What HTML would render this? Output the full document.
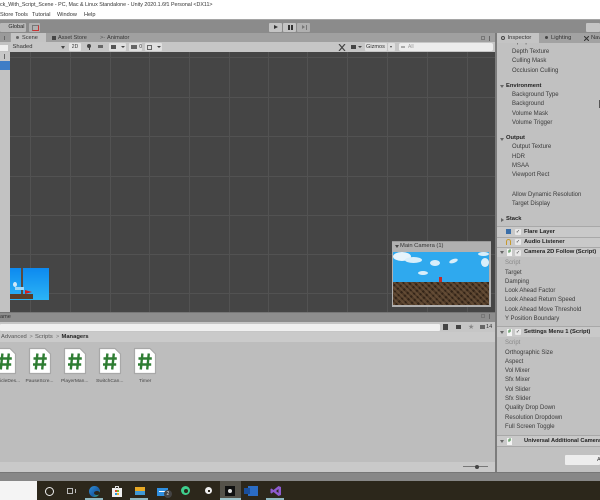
<!DOCTYPE html>
<html><head><meta charset="utf-8">
<style>
html,body{margin:0;padding:0;background:#fff}
#r{position:relative;width:600px;height:500px;overflow:hidden;font-family:"Liberation Sans",sans-serif;color:#222;background:#fff;filter:blur(.3px)}
#r div{position:absolute}
.t{white-space:nowrap;font-size:5.6px;line-height:9px;color:#333}
.ins{white-space:nowrap;font-size:6px;line-height:9px;color:#3a3a3a}
.b{font-weight:bold;color:#222;font-size:5.8px}
.v{background:#525252;width:1px;top:52px;height:260px;left:0}
.h{background:#525252;height:1px;left:10px;width:485px}
.btn{background:#d2d2d2;border-radius:1px}
.chk{width:6px;height:6px;background:#e8e8e8;border-radius:1px;font-size:5px;line-height:6px;text-align:center;color:#333}
.sep{background:#a8a8a8;height:1px;left:497px;width:103px}
.file{position:absolute;top:347px}
.fn{top:378px;font-size:4.9px;line-height:7px;color:#444;white-space:nowrap;text-align:center}
</style></head><body><div id="r">

<svg width="0" height="0" style="position:absolute"><defs><symbol id="f" viewBox="0 0 24 28"><path d="M1.5 1.5H17L22.5 7V26.5H1.5Z" fill="#fff" stroke="#a8a8a8" stroke-width="1.2" stroke-linejoin="round"/><path d="M9.4 6.5L7.8 22.5M15.8 6.5L14.2 22.5M5.5 11.5H18.8M5 17.5H18.2" stroke="#2e7d32" stroke-width="2.4" fill="none"/></symbol></defs></svg>

<div class="t" style="left:0;top:1px;font-size:5.32px;line-height:9px;color:#333">ck_With_Script_Scene - PC, Mac &amp; Linux Standalone - Unity 2020.1.6f1 Personal &lt;DX11&gt;</div>
<div class="t" style="left:0;top:10.5px">Store Tools</div>
<div class="t" style="left:32px;top:10.5px">Tutorial</div>
<div class="t" style="left:57px;top:10.5px">Window</div>
<div class="t" style="left:84px;top:10.5px">Help</div>

<div style="left:0;top:19px;width:600px;height:14px;background:#8b8b8b;border-top:1px solid #a5a5a5;box-sizing:border-box"></div>
<div class="btn t" style="left:0;top:23px;width:26px;height:9px;background:#b8b8b8;text-align:right;padding-right:1.5px;box-sizing:border-box;color:#222">Global</div>
<div class="btn" style="left:29px;top:23px;width:11px;height:9px;background:#b0b0b0"></div>
<div style="left:32px;top:25px;width:5px;height:4px;border:1px solid #777;border-bottom-color:#c33;border-right-color:#c33"></div>

<div class="btn" style="left:269px;top:23px;width:13px;height:9px;background:#c4c4c4"></div>
<div style="left:274px;top:25px;width:0;height:0;border-left:4px solid #333;border-top:2.5px solid transparent;border-bottom:2.5px solid transparent"></div>
<div class="btn" style="left:283px;top:23px;width:13px;height:9px;background:#c4c4c4"></div>
<div style="left:288px;top:25px;width:1.5px;height:5px;background:#333"></div>
<div style="left:291px;top:25px;width:1.5px;height:5px;background:#333"></div>
<div class="btn" style="left:297px;top:23px;width:13px;height:9px;background:#b0b0b0"></div>
<div style="left:302px;top:25px;width:0;height:0;border-left:3px solid #777;border-top:2.5px solid transparent;border-bottom:2.5px solid transparent"></div>
<div style="left:306px;top:25px;width:1px;height:5px;background:#777"></div>
<div class="btn" style="left:586px;top:23px;width:14px;height:9px;background:#c4c4c4"></div>

<!-- left panel -->
<div style="left:0;top:33px;width:10px;height:279px;background:#c2c2c2"></div>
<div style="left:0;top:33px;width:10px;height:9px;background:#9a9a9a"></div>
<div style="left:0;top:45px;width:8px;height:6px;background:#eee"></div>
<div style="left:0;top:52px;width:10px;height:9px;background:#c8c8c8"></div>
<div style="left:0;top:61px;width:10px;height:9px;background:#3e7dc6"></div>
<div style="left:3.5px;top:36px;width:1px;height:4px;background:#666"></div>
<div style="left:3.5px;top:54px;width:1px;height:5px;background:#666"></div>

<!-- tabs -->
<div style="left:10px;top:33px;width:486px;height:9px;background:#a0a0a0"></div>
<div style="left:11px;top:33px;width:35px;height:9px;background:#c4c4c4"></div>
<div class="t" style="left:22px;top:33.5px">Scene</div>
<div style="left:16px;top:36px;width:3px;height:3px;border-radius:50%;background:#666"></div>
<div class="t" style="left:58px;top:33.5px">Asset Store</div>
<div style="left:52px;top:36px;width:4px;height:4px;background:#444"></div>
<div class="t" style="left:107px;top:33.5px">Animator</div>
<div class="t" style="left:100px;top:33.5px;color:#555">&gt;-</div>
<div style="left:481px;top:36px;width:4px;height:4px;border:1px solid #777;box-sizing:border-box"></div>
<div style="left:489px;top:36px;width:1px;height:5px;background:#666"></div>

<!-- scene toolbar -->
<div style="left:10px;top:42px;width:486px;height:10px;background:#c6c6c6"></div>
<div class="t" style="left:12.5px;top:42.5px;font-size:5.8px">Shaded</div>
<div style="left:61px;top:46px;width:0;height:0;border-top:3px solid #444;border-left:2px solid transparent;border-right:2px solid transparent"></div>
<div class="btn t" style="left:69px;top:43px;width:12px;height:8px;background:#e4e4e4;font-size:5px;text-align:center;line-height:8px">2D</div>
<div style="left:87px;top:44px;width:4px;height:4px;background:#444;border-radius:50%"></div>
<div style="left:88.5px;top:47px;width:1px;height:3px;background:#444"></div>
<div style="left:98px;top:45px;width:5px;height:3px;background:#666"></div>
<div class="btn" style="left:109px;top:43px;width:17px;height:8px;background:#e0e0e0"></div>
<div style="left:111px;top:45px;width:5px;height:4px;background:#555"></div>
<div style="left:121px;top:46px;width:0;height:0;border-top:2.5px solid #444;border-left:2px solid transparent;border-right:2px solid transparent"></div>
<div class="btn t" style="left:129px;top:43px;width:13px;height:8px;background:#e0e0e0;font-size:5px;line-height:8px;text-align:right">0</div>
<div style="left:131px;top:45px;width:6px;height:4px;background:#666"></div>
<div class="btn" style="left:145px;top:43px;width:17px;height:8px;background:#e0e0e0"></div>
<div style="left:147px;top:45px;width:5px;height:5px;border:1px solid #666;box-sizing:border-box"></div>
<div style="left:157px;top:46px;width:0;height:0;border-top:2.5px solid #444;border-left:2px solid transparent;border-right:2px solid transparent"></div>

<svg style="position:absolute;left:338px;top:44px" width="8" height="7" viewBox="0 0 8 7"><path d="M1 0L7 7M7 0L1 7" stroke="#444" stroke-width="1.2"/></svg>
<div style="left:351px;top:45px;width:5px;height:4px;background:#444"></div>
<div style="left:358px;top:46px;width:0;height:0;border-top:2.5px solid #444;border-left:2px solid transparent;border-right:2px solid transparent"></div>
<div class="btn t" style="left:365px;top:43px;width:22px;height:8px;background:#e0e0e0;font-size:5.6px;line-height:8px;padding-left:1px;box-sizing:border-box">Gizmos</div>
<div class="btn" style="left:388px;top:43px;width:7px;height:8px;background:#e0e0e0"></div>
<div style="left:390px;top:46px;width:0;height:0;border-top:2.5px solid #444;border-left:1.5px solid transparent;border-right:1.5px solid transparent"></div>
<div style="left:399px;top:43px;width:94px;height:8px;background:#ececec;border-radius:2px"></div>
<div class="t" style="left:408px;top:43px;font-size:5px;line-height:8px;color:#999">All</div>
<div style="left:401px;top:46px;width:4px;height:2px;background:#aaa"></div>

<!-- scene -->
<div style="left:10px;top:52px;width:486px;height:260px;background:#454545"></div>
<div class="v" style="left:30px"></div><div class="v" style="left:70px"></div><div class="v" style="left:110px"></div><div class="v" style="left:149px"></div><div class="v" style="left:189px"></div><div class="v" style="left:229px"></div><div class="v" style="left:268px"></div><div class="v" style="left:307px"></div><div class="v" style="left:347px"></div><div class="v" style="left:387px"></div><div class="v" style="left:427px"></div><div class="v" style="left:467px"></div>
<div class="h" style="top:57px"></div><div class="h" style="top:97px"></div><div class="h" style="top:136px"></div><div class="h" style="top:176px"></div><div class="h" style="top:215px"></div><div class="h" style="top:254px"></div><div class="h" style="top:293px"></div>

<div style="left:10px;top:268px;width:39px;height:32px;background:linear-gradient(#0d8af0,#2cb4f5)"></div>
<div style="left:10px;top:294px;width:23px;height:5px;background:#5a3d28"></div>
<div style="left:21px;top:268px;width:1.5px;height:26px;background:#5a4a40"></div>
<div style="left:25px;top:290px;width:0;height:0;border-left:7px solid #d21c1c;border-top:2px solid transparent;border-bottom:2px solid transparent"></div>
<div style="left:13px;top:282px;width:4px;height:5px;background:#cfe8f8;border-radius:50%"></div>
<div style="left:15px;top:287px;width:9px;height:3px;background:#9fd8f8"></div>

<!-- camera preview -->
<div style="left:392px;top:241px;width:99px;height:66px;background:#b0b0b0;border-top:1px solid #999;box-sizing:border-box"></div>
<div class="t" style="left:400px;top:242px;font-size:5.8px;line-height:9px">Main Camera (1)</div>
<div style="left:395px;top:245px;width:0;height:0;border-top:3px solid #444;border-left:2px solid transparent;border-right:2px solid transparent"></div>
<div style="left:393px;top:252px;width:96px;height:30px;background:#2fa9ee"></div>
<div style="left:393px;top:282px;width:96px;height:23px;background-color:#4c3826;background-image:repeating-linear-gradient(45deg,rgba(110,85,60,.7) 0 2px,transparent 2px 4px),repeating-linear-gradient(-45deg,rgba(40,28,18,.7) 0 2px,transparent 2px 5px)"></div>
<div style="left:393px;top:252px;width:18px;height:9px;background:#e6f4fc;border-radius:50%"></div>
<div style="left:405px;top:257px;width:17px;height:6px;background:#d8eefa;border-radius:50%"></div>
<div style="left:430px;top:260px;width:10px;height:6px;background:#d8eefa;border-radius:50%"></div>
<div style="left:449px;top:259px;width:9px;height:4px;background:#d8eefa;border-radius:50%;transform:rotate(-20deg)"></div>
<div style="left:418px;top:271px;width:10px;height:4px;background:#d8eefa;border-radius:50%"></div>
<div style="left:478px;top:252px;width:11px;height:4px;background:#d8eefa;border-radius:50%"></div>
<div style="left:481px;top:258px;width:8px;height:9px;background:#d8eefa;border-radius:50%"></div>
<div style="left:439px;top:277px;width:3px;height:5px;background:#c22a2a"></div>

<!-- project panel -->
<div style="left:0;top:312px;width:496px;height:10px;background:#8d8d8d;border-top:1px solid #777;box-sizing:border-box"></div>
<div class="t" style="left:0;top:313px">ame</div>
<div style="left:0;top:322px;width:496px;height:10px;background:#c6c6c6"></div>
<div style="left:0;top:323.5px;width:440px;height:7px;background:#f0f0f0;border-radius:1px"></div>
<div style="left:481px;top:314px;width:4px;height:4px;border:1px solid #777;box-sizing:border-box"></div>
<div style="left:489px;top:314px;width:1px;height:5px;background:#666"></div>
<div style="left:443px;top:324px;width:5px;height:6px;background:#444"></div>
<div style="left:456px;top:325px;width:5px;height:4px;background:#444"></div>
<div class="t" style="left:468px;top:323px;font-size:7px;color:#888">★</div>
<div style="left:480px;top:325px;width:5px;height:4px;background:#666"></div>
<div class="t" style="left:486px;top:323px;font-size:5.6px;line-height:8px">14</div>
<div style="left:0;top:332px;width:496px;height:10px;background:#cacaca"></div>
<div style="left:0;top:342px;width:496px;height:120px;background:#bdbdbd"></div>
<div class="t" style="left:1px;top:332.5px;font-size:5.8px;color:#555">Advanced</div>
<div class="t" style="left:29.5px;top:332.5px;color:#777">&gt;</div>
<div class="t" style="left:35px;top:332.5px;font-size:5.8px;color:#555">Scripts</div>
<div class="t" style="left:56px;top:332.5px;color:#777">&gt;</div>
<div class="t b" style="left:61.5px;top:332.5px;font-size:5.8px">Managers</div>

<svg class="file" style="left:-7px" width="24" height="28"><use href="#f"/></svg>
<svg class="file" style="left:27.5px" width="24" height="28"><use href="#f"/></svg>
<svg class="file" style="left:62.5px" width="24" height="28"><use href="#f"/></svg>
<svg class="file" style="left:98px" width="24" height="28"><use href="#f"/></svg>
<svg class="file" style="left:133px" width="24" height="28"><use href="#f"/></svg>
<div class="fn" style="left:0">icleDes...</div>
<div class="fn" style="left:25.5px">PauseScre...</div>
<div class="fn" style="left:61px">PlayerMan...</div>
<div class="fn" style="left:96px">SwitchCan...</div>
<div class="fn" style="left:139px">Timer</div>

<div style="left:0;top:462px;width:496px;height:10px;background:#c9c9c9"></div>
<div style="left:463px;top:466px;width:25px;height:1px;background:#777"></div>
<div style="left:475px;top:464.5px;width:4px;height:4px;border-radius:50%;background:#444"></div>

<!-- inspector -->
<div style="left:495px;top:33px;width:2px;height:439px;background:#7c7c7c"></div>
<div style="left:497px;top:33px;width:103px;height:439px;background:#c1c1c1"></div>
<div style="left:497px;top:33px;width:103px;height:10px;background:#a2a2a2"></div>
<div style="left:497px;top:33px;width:42px;height:10px;background:#c4c4c4"></div>
<div style="left:501px;top:36px;width:4px;height:4px;border:1px solid #444;border-radius:50%;box-sizing:border-box"></div>
<div class="t" style="left:507.5px;top:34px;font-size:5.8px">Inspector</div>
<div style="left:545px;top:36px;width:3px;height:3px;background:#444;border-radius:50%"></div>
<div class="t" style="left:551px;top:34px;font-size:5.8px">Lighting</div>
<svg style="position:absolute;left:584px;top:36px" width="5" height="5" viewBox="0 0 5 5"><path d="M0 0L5 5M5 0L0 5" stroke="#333"/></svg>
<div class="t" style="left:591px;top:34px;font-size:5.8px">Nav</div>

<div class="ins" style="left:512px;top:38px;clip-path:inset(5px 0 0 0)">Opaque Texture</div>
<div class="ins" style="left:512px;top:47.5px">Depth Texture</div>
<div class="ins" style="left:512px;top:57px">Culling Mask</div>
<div class="ins" style="left:512px;top:66.5px">Occlusion Culling</div>
<div class="ins b" style="left:506px;top:81.5px">Environment</div>
<div class="ins" style="left:512px;top:91px">Background Type</div>
<div class="ins" style="left:512px;top:100px">Background</div>
<div class="ins" style="left:512px;top:109.5px">Volume Mask</div>
<div class="ins" style="left:512px;top:118.5px">Volume Trigger</div>
<div class="ins b" style="left:506px;top:134px">Output</div>
<div class="ins" style="left:512px;top:143px">Output Texture</div>
<div class="ins" style="left:512px;top:152.5px">HDR</div>
<div class="ins" style="left:512px;top:162px">MSAA</div>
<div class="ins" style="left:512px;top:171px">Viewport Rect</div>
<div class="ins" style="left:512px;top:190.5px">Allow Dynamic Resolution</div>
<div class="ins" style="left:512px;top:199.5px">Target Display</div>
<div class="ins b" style="left:506px;top:215px">Stack</div>
<div style="left:500px;top:85px;width:0;height:0;border-top:3px solid #666;border-left:2px solid transparent;border-right:2px solid transparent"></div>
<div style="left:500px;top:137.5px;width:0;height:0;border-top:3px solid #666;border-left:2px solid transparent;border-right:2px solid transparent"></div>
<div style="left:500.5px;top:218px;width:0;height:0;border-left:3px solid #666;border-top:2px solid transparent;border-bottom:2px solid transparent"></div>
<div style="left:599px;top:100px;width:1px;height:8px;background:#555"></div>

<div class="sep" style="top:226px"></div>
<div style="left:497px;top:227px;width:103px;height:10px;background:#c9c9c9"></div>
<div style="left:506px;top:229px;width:5px;height:5px;background:#3a6ea8"></div>
<div class="chk" style="left:515px;top:229px">✓</div>
<div class="ins b" style="left:524px;top:227.5px">Flare Layer</div>
<div class="sep" style="top:237px"></div>
<div style="left:497px;top:238px;width:103px;height:9px;background:#c9c9c9"></div>
<div style="left:506px;top:239px;width:5px;height:6px;border:1px solid #c79a2c;border-bottom:none;border-radius:3px 3px 0 0;box-sizing:border-box"></div>
<div class="chk" style="left:515px;top:239px">✓</div>
<div class="ins b" style="left:524px;top:237.5px">Audio Listener</div>
<div class="sep" style="top:247px"></div>
<div style="left:497px;top:248px;width:103px;height:9px;background:#c9c9c9"></div>
<div style="left:500px;top:251px;width:0;height:0;border-top:3px solid #666;border-left:2px solid transparent;border-right:2px solid transparent"></div>
<div style="left:507px;top:249px;width:5px;height:7px;background:#f4f4f4;color:#2e7d32;font:bold 5px/7px 'Liberation Sans',sans-serif;text-align:center">#</div>
<div class="chk" style="left:515px;top:249.5px">✓</div>
<div class="ins b" style="left:524px;top:248px">Camera 2D Follow (Script)</div>
<div class="ins" style="left:505px;top:259px;color:#888">Script</div>
<div class="ins" style="left:505px;top:268.5px">Target</div>
<div class="ins" style="left:505px;top:278px">Damping</div>
<div class="ins" style="left:505px;top:287px">Look Ahead Factor</div>
<div class="ins" style="left:505px;top:296px">Look Ahead Return Speed</div>
<div class="ins" style="left:505px;top:305.5px">Look Ahead Move Threshold</div>
<div class="ins" style="left:505px;top:315px">Y Position Boundary</div>
<div class="sep" style="top:326px"></div>
<div style="left:497px;top:327px;width:103px;height:10px;background:#c9c9c9"></div>
<div style="left:500px;top:331px;width:0;height:0;border-top:3px solid #666;border-left:2px solid transparent;border-right:2px solid transparent"></div>
<div style="left:507px;top:329px;width:5px;height:7px;background:#f4f4f4;color:#2e7d32;font:bold 5px/7px 'Liberation Sans',sans-serif;text-align:center">#</div>
<div class="chk" style="left:515px;top:329px">✓</div>
<div class="ins b" style="left:524px;top:328px">Settings Menu 1 (Script)</div>
<div class="ins" style="left:505px;top:339px;color:#888">Script</div>
<div class="ins" style="left:505px;top:348.5px">Orthographic Size</div>
<div class="ins" style="left:505px;top:358px">Aspect</div>
<div class="ins" style="left:505px;top:367px">Vol Mixer</div>
<div class="ins" style="left:505px;top:376px">Sfx Mixer</div>
<div class="ins" style="left:505px;top:385.5px">Vol Slider</div>
<div class="ins" style="left:505px;top:394.5px">Sfx Slider</div>
<div class="ins" style="left:505px;top:404px">Quality Drop Down</div>
<div class="ins" style="left:505px;top:413.5px">Resolution Dropdown</div>
<div class="ins" style="left:505px;top:422.5px">Full Screen Toggle</div>
<div class="sep" style="top:435px"></div>
<div style="left:497px;top:436px;width:103px;height:10px;background:#c9c9c9"></div>
<div style="left:500px;top:440px;width:0;height:0;border-top:3px solid #666;border-left:2px solid transparent;border-right:2px solid transparent"></div>
<div style="left:507px;top:437.5px;width:5px;height:7px;background:#f4f4f4;color:#2e7d32;font:bold 5px/7px 'Liberation Sans',sans-serif;text-align:center">#</div>
<div class="ins b" style="left:524px;top:436.5px;font-size:5.7px">Universal Additional Camera</div>
<div class="sep" style="top:446px"></div>
<div style="left:565px;top:455px;width:35px;height:10px;background:#ededed;border-radius:1px"></div>
<div class="t" style="left:597px;top:455.5px">A</div>

<!-- bottom bars -->
<div style="left:0;top:472px;width:600px;height:9px;background:#878787;border-top:1px solid #777;box-sizing:border-box"></div>
<div style="left:0;top:481px;width:600px;height:19px;background:#2c271b"></div>
<div style="left:0;top:481px;width:37px;height:19px;background:#f4f4f4"></div>

<div style="left:45px;top:487px;width:7px;height:7px;border:1.2px solid #eee;border-radius:50%"></div>
<div style="left:67px;top:488px;width:6px;height:6px;border:1px solid #bbb;box-sizing:border-box"></div>
<div style="left:74.5px;top:489px;width:1px;height:4px;background:#bbb"></div>
<div style="left:89px;top:486px;width:11px;height:11px;border-radius:50%;background:linear-gradient(135deg,#2f8fd8,#1a5fa8 60%,#45c06a)"></div>
<div style="left:94px;top:491px;width:6px;height:4px;border-radius:50%;background:#2c271b"></div>
<div style="left:85px;top:498px;width:18px;height:2px;background:#8fb8c0"></div>
<div style="left:112px;top:488px;width:10px;height:9px;background:#f0f0f0"></div>
<div style="left:114.5px;top:490px;width:2px;height:2px;background:#e0452c"></div>
<div style="left:117px;top:490px;width:2px;height:2px;background:#6dbb2c"></div>
<div style="left:114.5px;top:492.5px;width:2px;height:2px;background:#2c9cdc"></div>
<div style="left:117px;top:492.5px;width:2px;height:2px;background:#f0b429"></div>
<div style="left:115px;top:485.5px;width:4px;height:3px;border:1px solid #ddd;border-bottom:none;box-sizing:border-box"></div>
<div style="left:130px;top:498px;width:18px;height:2px;background:#8fb8c0"></div>
<div style="left:135px;top:487px;width:10px;height:8px;background:#e8a924"></div>
<div style="left:135px;top:491px;width:10px;height:4px;background:#3f9ad6"></div>
<div style="left:157px;top:488px;width:11px;height:8px;background:#2f8fe0"></div>
<div style="left:159px;top:491px;width:9px;height:1px;background:#fff"></div>
<div style="left:164px;top:490px;width:8px;height:8px;border-radius:50%;background:#444"></div>
<div class="t" style="left:166.5px;top:490px;font-size:5px;line-height:8px;color:#ddd">2</div>
<div style="left:181px;top:486px;width:9px;height:9px;border-radius:50%;background:#3ecf8e"></div>
<div style="left:183.5px;top:488.5px;width:4px;height:4px;border-radius:50%;background:#2c271b"></div>
<div style="left:205px;top:487px;width:7px;height:7px;border-radius:50%;background:#eee"></div>
<div style="left:208px;top:489.5px;width:2px;height:2px;background:#2c271b"></div>
<div style="left:220px;top:481px;width:21px;height:19px;background:#55524a"></div>
<div style="left:225px;top:486px;width:10px;height:10px;background:#111"></div>
<div style="left:228px;top:489px;width:4px;height:4px;background:#ddd;border-radius:50%"></div>
<div style="left:220px;top:498px;width:21px;height:2px;background:#9fc4cc"></div>
<div style="left:248px;top:486px;width:10px;height:10px;background:#2b6cc4"></div>
<div style="left:244px;top:488px;width:6px;height:6px;background:#1a4f9c"></div>
<div style="left:266px;top:498px;width:18px;height:2px;background:#8fb8c0"></div>
<svg style="position:absolute;left:270px;top:485px" width="12" height="12" viewBox="0 0 12 12"><path d="M8.5 1L11 2v8L8.5 11 3.5 7 1.5 8.5 .5 8V4l1-.5 2 1.5zM8.5 4L6 6l2.5 2z" fill="#8e5bd0"/></svg>

</div></body></html>
